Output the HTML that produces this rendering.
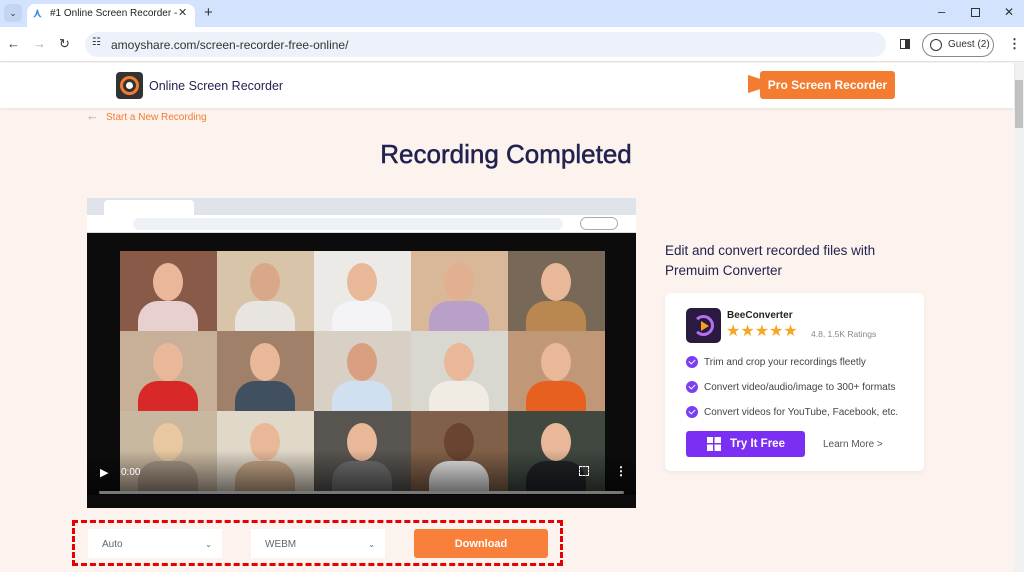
<!DOCTYPE html>
<html><head><meta charset="utf-8"><style>
*{margin:0;padding:0;box-sizing:border-box}
body{width:1024px;height:572px;overflow:hidden;font-family:"Liberation Sans",sans-serif;background:#fdf3ee;position:relative}
.abs{position:absolute}
.cell{position:absolute;width:97px;height:80px;overflow:hidden}
.face{position:absolute;left:33px;top:12px;width:30px;height:38px;border-radius:50%;background:#e8b898}
.body{position:absolute;left:18px;top:50px;width:60px;height:40px;border-radius:20px 20px 0 0}
.check{position:absolute;left:686px;width:12px;height:12px;border-radius:50%;background:#7b3ff2}
.check::after{content:"";position:absolute;left:3px;top:3px;width:5px;height:3px;border-left:1.5px solid #fff;border-bottom:1.5px solid #fff;transform:rotate(-45deg)}
.ft{position:absolute;left:704px;font-size:10px;color:#444}
</style></head><body>
<!-- chrome tabs -->
<div class="abs" style="left:0;top:0;width:1024px;height:27px;background:#d3e3fd"></div>
<div class="abs" style="left:4px;top:4px;width:18px;height:18px;border-radius:5px;background:#c4d5f2;font-size:9px;text-align:center;line-height:18px;color:#333">⌄</div>
<div class="abs" style="left:27px;top:4px;width:168px;height:24px;background:#fff;border-radius:8px 8px 0 0"></div>
<div class="abs" style="left:33px;top:6px;font-size:12px;color:#3a8ae0;font-weight:bold">⋏</div>
<div class="abs" style="left:50px;top:8px;font-size:10px;color:#222">#1 Online Screen Recorder -</div>
<div class="abs" style="left:178px;top:6px;font-size:11px;color:#333">✕</div>
<div class="abs" style="left:204px;top:4px;font-size:15px;color:#333">+</div>
<div class="abs" style="left:938px;top:4px;font-size:13px;color:#333">–</div>
<div class="abs" style="left:971px;top:8px;width:9px;height:9px;border:1.2px solid #333"></div>
<div class="abs" style="left:1004px;top:5px;font-size:12px;color:#333">✕</div>
<!-- toolbar -->
<div class="abs" style="left:0;top:27px;width:1024px;height:35px;background:#fff;border-bottom:1px solid #e3e3e3"></div>
<div class="abs" style="left:7px;top:36px;font-size:13px;color:#333">←</div>
<div class="abs" style="left:33px;top:36px;font-size:13px;color:#aaa">→</div>
<div class="abs" style="left:59px;top:36px;font-size:13px;color:#333">↻</div>
<div class="abs" style="left:85px;top:32px;width:801px;height:25px;border-radius:13px;background:#edf1f9"></div>
<div class="abs" style="left:92px;top:37px;font-size:10px;color:#333">☷</div>
<div class="abs" style="left:111px;top:38px;font-size:12px;color:#333">amoyshare.com/screen-recorder-free-online/</div>
<div class="abs" style="left:900px;top:39px;width:10px;height:10px;border:1.5px solid #333;border-right-width:5px"></div>
<div class="abs" style="left:922px;top:33px;width:72px;height:24px;border:1px solid #888;border-radius:12px;font-size:10px;color:#333;line-height:22px;padding-left:25px">Guest (2)</div>
<div class="abs" style="left:930px;top:39px;width:12px;height:12px;border:1.3px solid #333;border-radius:50%"></div>
<div class="abs" style="left:1008px;top:36px;font-size:13px;color:#333;font-weight:bold">⋮</div>
<!-- scrollbar -->
<div class="abs" style="left:1014px;top:63px;width:10px;height:509px;background:#f1f1f1"></div>
<div class="abs" style="left:1015px;top:80px;width:8px;height:48px;background:#c1c1c1"></div>
<!-- site header -->
<div class="abs" style="left:0;top:63px;width:1014px;height:45px;background:#fff;box-shadow:0 1px 3px rgba(0,0,0,.08)"></div>
<div class="abs" style="left:116px;top:72px;width:27px;height:27px;border-radius:4px;background:#333"></div>
<div class="abs" style="left:120px;top:76px;width:19px;height:19px;border-radius:50%;border:3px solid #f47c30"></div>
<div class="abs" style="left:126px;top:82px;width:7px;height:7px;border-radius:50%;background:#fff"></div>
<div class="abs" style="left:149px;top:79px;font-size:12.5px;color:#222250">Online Screen Recorder</div>
<div class="abs" style="left:748px;top:75px;width:14px;height:18px;background:#f47c30;clip-path:polygon(0 0,100% 25%,100% 75%,0 100%)"></div>
<div class="abs" style="left:760px;top:71px;width:135px;height:28px;border-radius:3px;background:#f47c30;color:#fff;font-size:12px;font-weight:bold;text-align:center;line-height:28px">Pro Screen Recorder</div>
<!-- back link -->
<div class="abs" style="left:86px;top:108px;font-size:13px;color:#aaa">←</div>
<div class="abs" style="left:106px;top:112px;font-size:10px;color:#f47c30">Start a New Recording</div>
<div class="abs" style="left:0;top:139px;width:1012px;text-align:center;font-size:26px;color:#222250;-webkit-text-stroke:0.5px #222250">Recording Completed</div>
<!-- video -->
<div class="abs" style="left:87px;top:198px;width:549px;height:310px;background:#0c0c0c"></div>
<div class="abs" style="left:87px;top:198px;width:549px;height:35px;background:#fff;border-bottom:1px solid #ddd"></div>
<div class="abs" style="left:87px;top:198px;width:549px;height:17px;background:#dfe3ea"></div>
<div class="abs" style="left:104px;top:200px;width:90px;height:15px;background:#fff;border-radius:4px 4px 0 0"></div>
<div class="abs" style="left:133px;top:218px;width:430px;height:12px;background:#eef1f6;border-radius:6px"></div>
<div class="abs" style="left:580px;top:217px;width:38px;height:13px;border:1px solid #aaa;border-radius:7px"></div>
<div class="abs" style="left:120px;top:251px;width:484px;height:240px">
<div class="cell" style="left:0;top:0;background:#8a5a48"><div class="face"></div><div class="body" style="background:#e8d0d0"></div></div>
<div class="cell" style="left:97px;top:0;background:#d8c4a8"><div class="face" style="background:#d8a888"></div><div class="body" style="background:#e8e4e0"></div></div>
<div class="cell" style="left:194px;top:0;background:#eceae6"><div class="face"></div><div class="body" style="background:#f4f4f8"></div></div>
<div class="cell" style="left:291px;top:0;background:#d8b898"><div class="face" style="background:#e0b090"></div><div class="body" style="background:#b8a0c8"></div></div>
<div class="cell" style="left:388px;top:0;background:#786858"><div class="face"></div><div class="body" style="background:#b88850"></div></div>
<div class="cell" style="left:0;top:80px;background:#c8b098"><div class="face"></div><div class="body" style="background:#d82828"></div></div>
<div class="cell" style="left:97px;top:80px;background:#a08068"><div class="face"></div><div class="body" style="background:#405060"></div></div>
<div class="cell" style="left:194px;top:80px;background:#d8d0c4"><div class="face" style="background:#d8a080"></div><div class="body" style="background:#d0e0f0"></div></div>
<div class="cell" style="left:291px;top:80px;background:#d8d8d0"><div class="face"></div><div class="body" style="background:#f0ece4"></div></div>
<div class="cell" style="left:388px;top:80px;background:#c09878"><div class="face"></div><div class="body" style="background:#e86020"></div></div>
<div class="cell" style="left:0;top:160px;background:#c8b8a0"><div class="face" style="background:#e8c8a0"></div><div class="body" style="background:#a89888"></div></div>
<div class="cell" style="left:97px;top:160px;background:#e0d8c8"><div class="face"></div><div class="body" style="background:#c8a888"></div></div>
<div class="cell" style="left:194px;top:160px;background:#585450"><div class="face"></div><div class="body" style="background:#707070"></div></div>
<div class="cell" style="left:291px;top:160px;background:#806048"><div class="face" style="background:#6a4430"></div><div class="body" style="background:#e8e8e8"></div></div>
<div class="cell" style="left:388px;top:160px;background:#404840"><div class="face"></div><div class="body" style="background:#202428"></div></div>
</div>
<div class="abs" style="left:87px;top:450px;width:549px;height:45px;background:linear-gradient(transparent,rgba(0,0,0,.6))"></div>
<div class="abs" style="left:100px;top:466px;font-size:11px;color:#fff">▶</div>
<div class="abs" style="left:121px;top:467px;font-size:10px;color:#fff">0:00</div>
<div class="abs" style="left:579px;top:466px;width:10px;height:10px;border:1.5px dashed #fff"></div>
<div class="abs" style="left:615px;top:464px;font-size:12px;color:#fff;font-weight:bold">⋮</div>
<div class="abs" style="left:99px;top:491px;width:525px;height:3px;background:#777;border-radius:2px"></div>
<!-- controls -->
<div class="abs" style="left:72px;top:520px;width:491px;height:46px;border:3px dashed #e60000"></div>
<div class="abs" style="left:88px;top:529px;width:134px;height:29px;background:#fff;font-size:10px;color:#666;line-height:31px;padding-left:14px">Auto<span style="position:absolute;right:10px;font-size:8px">⌄</span></div>
<div class="abs" style="left:251px;top:529px;width:134px;height:29px;background:#fff;font-size:10px;color:#666;line-height:31px;padding-left:14px">WEBM<span style="position:absolute;right:10px;font-size:8px">⌄</span></div>
<div class="abs" style="left:414px;top:529px;width:134px;height:29px;background:#f9803a;border-radius:3px;font-size:11px;color:#fff;font-weight:bold;line-height:31px;text-align:center">Download</div>
<!-- right -->
<div class="abs" style="left:665px;top:241px;font-size:13.5px;color:#222250;line-height:20px">Edit and convert recorded files with<br>Premuim Converter</div>
<div class="abs" style="left:665px;top:293px;width:259px;height:178px;background:#fff;border-radius:6px;box-shadow:0 2px 6px rgba(0,0,0,.05)"></div>
<div class="abs" style="left:686px;top:308px;width:35px;height:35px;border-radius:5px;background:#2a1a40"></div>
<div class="abs" style="left:693px;top:315px;width:21px;height:21px;border-radius:50%;border:3px solid #b56ff0;border-left-color:transparent"></div>
<div class="abs" style="left:701px;top:321px;width:0;height:0;border-left:8px solid #f4a020;border-top:5px solid transparent;border-bottom:5px solid transparent"></div>
<div class="abs" style="left:727px;top:310px;font-size:10px;font-weight:bold;color:#222">BeeConverter</div>
<div class="abs" style="left:726px;top:323px;font-size:16px;line-height:18px;color:#f5a623;letter-spacing:0px">★★★★★</div>
<div class="abs" style="left:811px;top:329px;font-size:8.5px;color:#888">4.8, 1.5K Ratings</div>
<div class="check" style="top:356px"></div><div class="ft" style="top:357px">Trim and crop your recordings fleetly</div>
<div class="check" style="top:381px"></div><div class="ft" style="top:382px">Convert video/audio/image to 300+ formats</div>
<div class="check" style="top:406px"></div><div class="ft" style="top:407px">Convert videos for YouTube, Facebook, etc.</div>
<div class="abs" style="left:686px;top:431px;width:119px;height:26px;background:#7b2ff2;border-radius:3px;color:#fff;font-size:11.5px;font-weight:bold;line-height:27px;padding-left:44px">Try It Free</div>
<div class="abs" style="left:707px;top:437px;width:14px;height:14px;background:linear-gradient(#7b2ff2,#7b2ff2) 6px 0/1.5px 100% no-repeat,linear-gradient(#7b2ff2,#7b2ff2) 0 6px/100% 1.5px no-repeat,#fff"></div>
<div class="abs" style="left:823px;top:439px;font-size:10px;color:#555">Learn More &gt;</div>
</body></html>
